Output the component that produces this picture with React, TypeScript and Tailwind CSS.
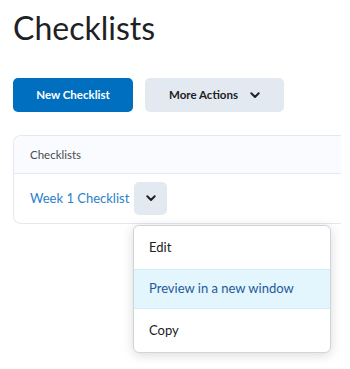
import React from "react";

const Chevron: React.FC<{ className?: string }> = ({ className }) => (
  <svg viewBox="0 0 10 7" className={className} fill="none">
    <path
      d="M1.3 1.3l3.7 3.7 3.7-3.7"
      stroke="currentColor"
      strokeWidth="2"
      strokeLinecap="round"
      strokeLinejoin="round"
    />
  </svg>
);

const App: React.FC = () => {
  const menu = [
    { label: "Edit", active: false },
    { label: "Preview in a new window", active: true },
    { label: "Copy", active: false },
  ];

  return (
    <div className="w-[350px] h-[369px] bg-white overflow-hidden font-['Lato',sans-serif] pl-[13px] pt-[8px]">
      <h1 className="text-[32px] leading-[40px] text-[#202122] font-normal">
        Checklists
      </h1>

      {/* Action buttons */}
      <div className="flex gap-[12px] mt-[30px]">
        <button className="w-[120px] h-[34px] rounded-[5px] bg-[#006fbf] text-white text-[11.5px] font-bold">
          New Checklist
        </button>
        <button className="w-[139px] h-[34px] rounded-[5px] bg-[#e3e9f1] text-[#202122] text-[11.5px] font-bold flex items-center justify-center gap-[12px]">
          More Actions
          <Chevron className="w-[10px] h-[7px] text-[#202122]" />
        </button>
      </div>

      {/* Table */}
      <div className="relative mt-[23px] w-[328px]">
        <div className="border border-r-0 border-[#e3e9f1] rounded-l-[8px]">
          <div className="h-[38px] bg-[#f9fbff] border-b border-[#e3e9f1] rounded-tl-[8px] flex items-center pl-[16px] text-[11.5px] text-[#494c4e]">
            Checklists
          </div>
          <div className="h-[49px] flex items-center pl-[16px]">
            <span className="text-[13px] text-[#2c7fc9]">
              Week 1 Checklist
            </span>
            <span className="ml-[5px] w-[33px] h-[33px] rounded-[5px] bg-[#e3e9f1] flex items-center justify-center">
              <Chevron className="w-[10px] h-[7px] text-[#202122]" />
            </span>
          </div>
        </div>

        {/* Dropdown menu */}
        <div className="absolute left-[120px] top-[90px] w-[198px] bg-white border border-[#cdd5dc] rounded-[6px] shadow-[0_2px_12px_rgba(0,0,0,0.15)] overflow-hidden">
          {menu.map((item, i) => (
            <div
              key={item.label}
              className={`flex items-center pl-[15px] text-[13px] ${
                i === 1 ? "h-[40px]" : "h-[43px]"
              } ${
                item.active
                  ? "bg-[#e3f5fd] text-[#1e5a9a] border-y border-[#d3ecf9]"
                  : "text-[#202122]"
              }`}
            >
              {item.label}
            </div>
          ))}
        </div>
      </div>
    </div>
  );
};

export default App;
